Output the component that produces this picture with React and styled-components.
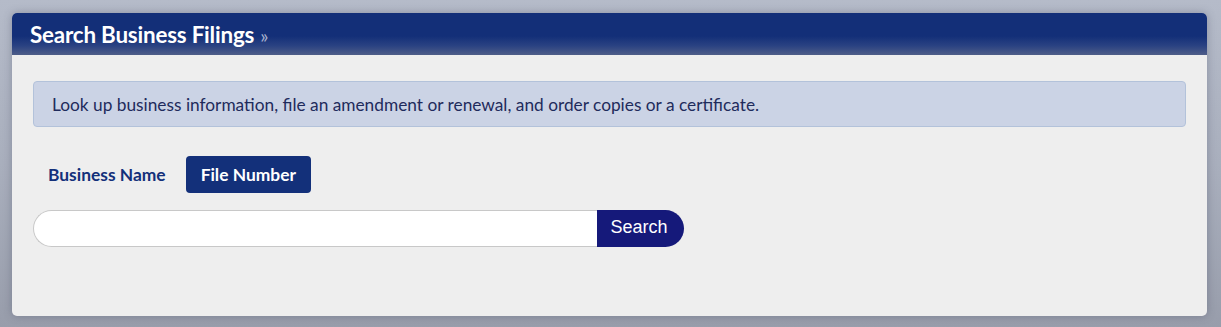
import React, { useState } from 'react';
import styled, { createGlobalStyle } from 'styled-components';

const GlobalStyle = createGlobalStyle`
  html, body {
    margin: 0;
    padding: 0;
  }
  body {
    background: linear-gradient(to bottom, #b5bbc9 0%, #a9afbd 50%, #989dab 100%);
    min-height: 327px;
    font-family: Lato, "Liberation Sans", sans-serif;
  }
`;

const Page = styled.div`
  padding: 13px 14px 11px 12px;
  height: 327px;
  box-sizing: border-box;
`;

const Panel = styled.section`
  background: #eeeeee;
  border-radius: 5px;
  overflow: hidden;
  box-shadow: 0 0 8px rgba(60, 66, 90, 0.35);
  height: 303px;
  display: flex;
  flex-direction: column;
`;

const Header = styled.header`
  height: 42px;
  background: linear-gradient(to bottom, #132f78 0%, #132f78 55%, #2a4282 78%, #4e5d88 100%);
  display: flex;
  align-items: center;
  padding: 0 18px;
  box-sizing: border-box;
`;

const Title = styled.h1`
  margin: 0;
  font-family: Lato, sans-serif;
  font-weight: 700;
  font-size: 22.4px;
  color: #ffffff;
  letter-spacing: -0.2px;
`;

const Chevrons = styled.span`
  color: #a9b3cf;
  font-weight: 400;
  font-size: 19px;
  margin-left: 6px;
`;

const Body = styled.div`
  padding: 26px 21px 0 21px;
  display: flex;
  flex-direction: column;
`;

const Notice = styled.div`
  background: #cbd3e5;
  border: 1px solid #b3c2da;
  border-radius: 4px;
  height: 46px;
  box-sizing: border-box;
  display: flex;
  align-items: center;
  padding: 0 18px;
  font-size: 17.3px;
  color: #1f2b5c;
`;

const Tabs = styled.div`
  display: flex;
  align-items: center;
  gap: 5px;
  margin-top: 29px;
`;

const Tab = styled.button`
  font-family: Lato, sans-serif;
  font-weight: 700;
  font-size: 17.4px;
  height: 37px;
  padding: 0 15px;
  border: none;
  border-radius: 4px;
  cursor: pointer;
  background: ${p => (p.$active ? '#13307a' : 'transparent')};
  color: ${p => (p.$active ? '#ffffff' : '#13307a')};
`;

const SearchRow = styled.form`
  display: flex;
  margin-top: 17px;
  width: 651px;
  height: 37px;
`;

const Input = styled.input`
  flex: 1;
  border: 1px solid #c8c8c8;
  border-right: none;
  border-radius: 19px 0 0 19px;
  background: #ffffff;
  padding: 0 16px;
  font-size: 16px;
  outline: none;
`;

const SearchButton = styled.button`
  width: 87px;
  border: none;
  border-radius: 0 19px 19px 0;
  background: #15197a;
  color: #ffffff;
  font-family: Arial, "Liberation Sans", sans-serif;
  font-size: 18px;
  cursor: pointer;
  padding: 0 3px 2px 0;
`;

export default function App() {
  const [mode, setMode] = useState('file');
  return (
    <>
      <GlobalStyle />
      <Page>
        <Panel>
          <Header>
            <Title>
              Search Business Filings<Chevrons>»</Chevrons>
            </Title>
          </Header>
          <Body>
            <Notice>
              Look up business information, file an amendment or renewal, and order copies or a certificate.
            </Notice>
            <Tabs>
              <Tab $active={mode === 'name'} onClick={() => setMode('name')}>Business Name</Tab>
              <Tab $active={mode === 'file'} onClick={() => setMode('file')}>File Number</Tab>
            </Tabs>
            <SearchRow onSubmit={e => e.preventDefault()}>
              <Input type="text" />
              <SearchButton type="submit">Search</SearchButton>
            </SearchRow>
          </Body>
        </Panel>
      </Page>
    </>
  );
}
